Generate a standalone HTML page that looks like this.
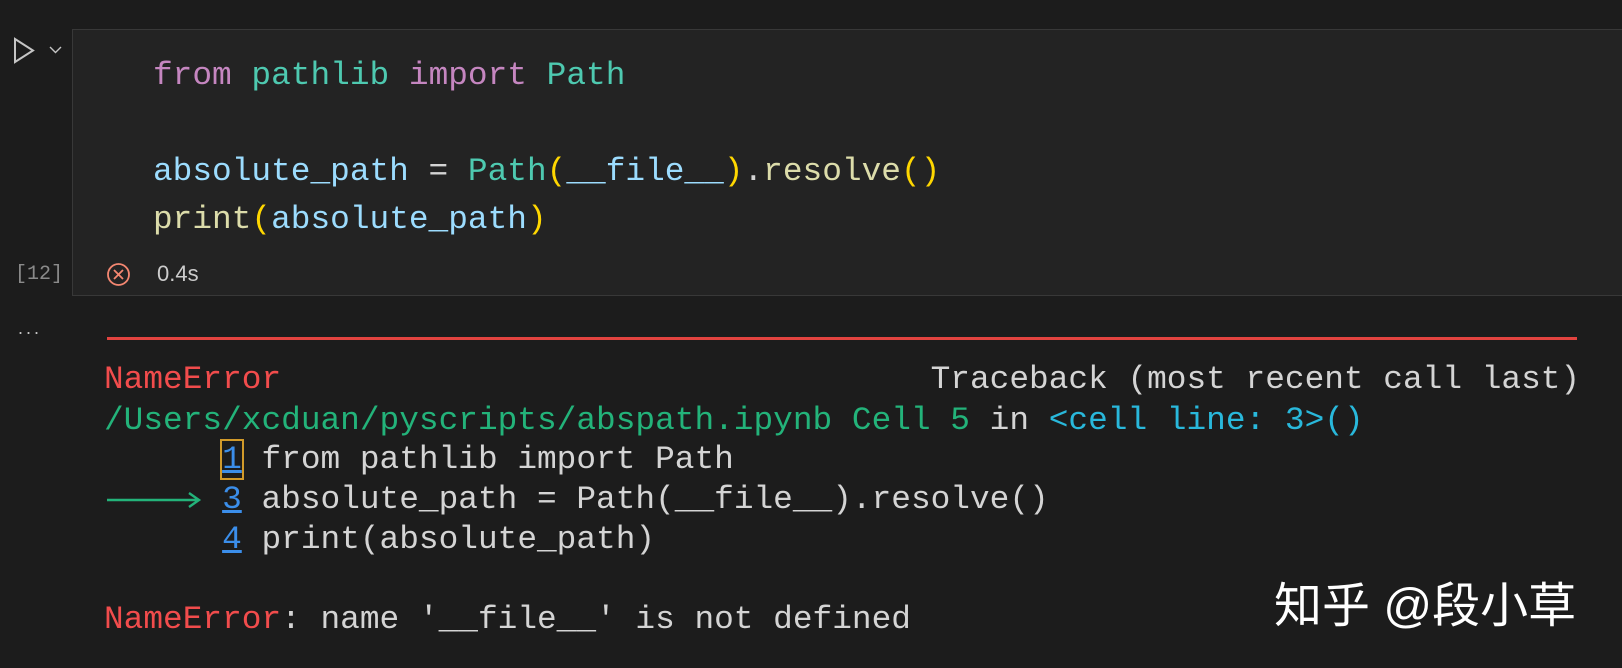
<!DOCTYPE html>
<html><head><meta charset="utf-8"><style>
html,body{margin:0;padding:0;width:1622px;height:668px;background:#1c1c1c;overflow:hidden;position:relative}
.m{font-family:"Liberation Mono","DejaVu Sans Mono",monospace;font-size:32.8px;white-space:pre;position:absolute;line-height:1}
.cell{position:absolute;left:72px;top:29px;width:1560px;height:267px;background:#232323;border:1px solid #383838;box-sizing:border-box}
.kw{color:#c586c0}.mod{color:#4ec9b0}.var{color:#9cdcfe}.fn{color:#dcdcaa}.p{color:#ffd700}.w{color:#d4d4d4}
.red{color:#f14c4c}.grn{color:#23b37a}.cy{color:#29b8db}.ln{color:#3b8eea;text-decoration:underline}
</style></head><body>
<svg style="position:absolute;left:0;top:0" width="70" height="80"><path d="M15 39 L33 50.5 L15 62 Z" fill="none" stroke="#c5c5c5" stroke-width="2"/><path d="M50 47 L55.5 52.5 L61 47" fill="none" stroke="#c5c5c5" stroke-width="1.4"/></svg>
<div class="cell"></div>
<div class="m" style="left:153px;top:60px"><span class="kw">from</span> <span class="mod">pathlib</span> <span class="kw">import</span> <span class="mod">Path</span></div>
<div class="m" style="left:153px;top:156px"><span class="var">absolute_path</span> <span class="w">=</span> <span class="mod">Path</span><span class="p">(</span><span class="var">__file__</span><span class="p">)</span><span class="w">.</span><span class="fn">resolve</span><span class="p">()</span></div>
<div class="m" style="left:153px;top:204px"><span class="fn">print</span><span class="p">(</span><span class="var">absolute_path</span><span class="p">)</span></div>
<div style="position:absolute;left:15px;top:263px;font-family:'Liberation Mono',monospace;font-size:20px;color:#8a8a8a">[12]</div>
<svg style="position:absolute;left:106px;top:262px" width="25" height="25"><circle cx="12.5" cy="12.5" r="10.5" fill="none" stroke="#f48771" stroke-width="1.8"/><path d="M8 8L17 17M17 8L8 17" stroke="#f48771" stroke-width="1.8"/></svg>
<div style="position:absolute;left:157px;top:261px;font-family:'Liberation Sans',sans-serif;font-size:22px;color:#cccccc">0.4s</div>
<div style="position:absolute;left:18px;top:318px;color:#c5c5c5;font-family:'Liberation Sans',sans-serif;font-size:18px;letter-spacing:3px">...</div>
<div style="position:absolute;left:107px;top:337px;width:1470px;height:3px;background:#e2433f"></div>
<div class="m" style="left:104px;top:364px"><span class="red">NameError</span>                                 <span class="w">Traceback (most recent call last)</span></div>
<div class="m" style="left:104px;top:405px"><span class="grn">/Users/xcduan/pyscripts/abspath.ipynb Cell 5</span><span class="w"> in </span><span class="cy">&lt;cell line: 3&gt;()</span></div>
<div class="m w" style="left:104px;top:444px">      <span class="ln" style="outline:2px solid #d19a2a">1</span> from pathlib import Path</div>
<svg style="position:absolute;left:106px;top:490px" width="96" height="20"><path d="M1 10 H92 M83 3 L93 10 L83 17" fill="none" stroke="#23b37a" stroke-width="2.4"/></svg>
<div class="m w" style="left:104px;top:484px">      <span class="ln">3</span> absolute_path = Path(__file__).resolve()</div>
<div class="m w" style="left:104px;top:524px">      <span class="ln">4</span> print(absolute_path)</div>
<div class="m w" style="left:104px;top:604px"><span class="red">NameError</span>: name '__file__' is not defined</div>
<div style="position:absolute;left:1274px;top:566px;font-family:'Liberation Sans','Noto Sans CJK SC',sans-serif;font-size:48px;color:#ffffff;white-space:nowrap">知乎 @段小草</div>
</body></html>
